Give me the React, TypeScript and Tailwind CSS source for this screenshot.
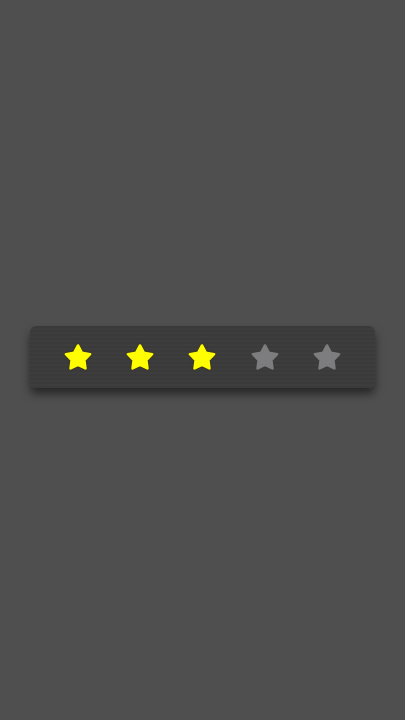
const STAR_POINTS =
  "13,3 16.41,9.31 23.46,10.6 18.52,15.79 19.47,22.9 13,19.8 6.53,22.9 7.48,15.79 2.54,10.6 9.59,9.31";

function Star({ filled }: { filled: boolean }) {
  const color = filled ? "#ffff00" : "#7d7c7e";
  return (
    <svg
      width="30"
      height="30"
      viewBox="0 0 26 26"
      className={filled ? "drop-shadow-[0_0_1px_rgba(60,50,0,0.9)]" : ""}
    >
      <polygon
        points={STAR_POINTS}
        fill={color}
        stroke={color}
        strokeWidth="2.2"
        strokeLinejoin="round"
      />
    </svg>
  );
}

export default function App() {
  const rating = 3;

  return (
    <div className="min-h-[720px] bg-[#4f4f4f] px-[30px] pt-[326px] font-['Liberation_Sans',sans-serif]">
      <div className="grid h-[62px] grid-cols-5 items-center rounded-md bg-[repeating-linear-gradient(0deg,#3a3a3a_0px,#3a3a3a_2px,#3d3d3d_2px,#3d3d3d_4px)] px-[17px] shadow-[0_6px_9px_rgba(0,0,0,0.5)]">
        {[1, 2, 3, 4, 5].map((n) => (
          <div key={n} className="flex justify-center">
            <Star filled={n <= rating} />
          </div>
        ))}
      </div>
    </div>
  );
}
